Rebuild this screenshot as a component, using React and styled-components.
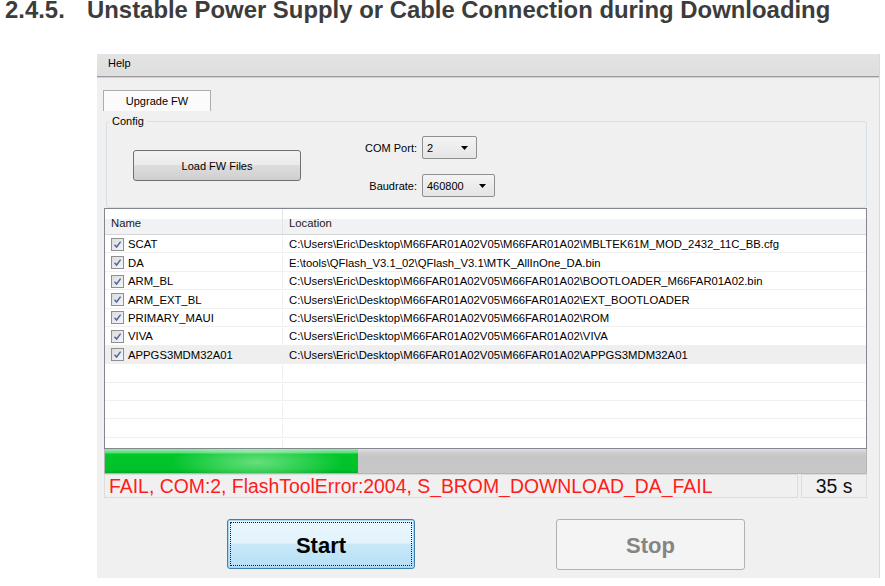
import React from 'react';
import styled, { createGlobalStyle } from 'styled-components';

const GlobalStyle = createGlobalStyle`
    html, body {
        margin: 0;
        padding: 0;
        background: #fff;
    }
    body {
        font-family: "Liberation Sans", Arial, sans-serif;
    }
`;

const Page = styled.div`
    width: 885px;
    height: 586px;
    overflow: hidden;
`;

const Heading = styled.h1`
    margin: -2px 0 0 5px;
    font: bold 23.9px/24px "Liberation Sans", Arial, sans-serif;
    color: #3c3c3c;
    white-space: nowrap;
`;

const Num = styled.span`
    display: inline-block;
    width: 82px;
`;

const Window = styled.div`
    margin: 32px 0 0 97px;
    width: 783px;
    height: 524px;
    box-sizing: border-box;
    background: #f0f0f0;
    border-right: 1px solid #dadada;
    font: 11px "Liberation Sans", Arial, sans-serif;
    color: #000;
    display: flex;
    flex-direction: column;
`;

const MenuBar = styled.div`
    height: 22px;
    line-height: 18px;
    padding-left: 11px;
    background: linear-gradient(#e4e4e4, #dedede);
    border-bottom: 1px solid #9c9c9c;
    box-shadow: 0 1px 0 #cfcfcf;
`;

const Content = styled.div`
    padding: 13px 12px 0 7px;
    display: flex;
    flex-direction: column;
`;

const Tab = styled.div`
    margin-left: -1px;
    width: 108px;
    height: 21px;
    box-sizing: border-box;
    border: 1px solid #adadad;
    border-bottom: none;
    background: #fbfbfb;
    text-align: center;
    line-height: 20px;
`;

const Group = styled.fieldset`
    margin: 4px 0 0 2px;
    padding: 0;
    height: 93px;
    box-sizing: border-box;
    min-width: 0;
    border: 1px solid #d5dfe5;
    border-radius: 3px;
`;

const Legend = styled.legend`
    margin-left: 2px;
    padding: 0 3px;
    line-height: 13px;
`;

const ConfigRow = styled.div`
    display: flex;
    align-items: flex-start;
    padding-left: 26px;
`;

const LoadButton = styled.div`
    margin-top: 22px;
    width: 168px;
    height: 31px;
    box-sizing: border-box;
    border: 1px solid #707070;
    border-radius: 3px;
    background: linear-gradient(#f2f2f2 0%, #ebebeb 50%, #dddddd 50%, #cfcfcf 100%);
    display: flex;
    align-items: center;
    justify-content: center;
`;

const PortGrid = styled.div`
    margin: 8px 0 0 55px;
    display: grid;
    grid-template-columns: 61px auto;
    column-gap: 5px;
    row-gap: 15px;
    align-items: center;
`;

const Label = styled.span`
    text-align: right;
`;

const Combo = styled.div`
    width: ${p => p.$w}px;
    height: 23px;
    box-sizing: border-box;
    border: 1px solid #8e8f8f;
    border-radius: 2px;
    background: linear-gradient(#f4f4f4, #e4e4e4);
    display: flex;
    align-items: center;
    justify-content: space-between;
    padding: 0 8px 0 4px;
`;

const Table = styled.div`
    height: 241px;
    box-sizing: border-box;
    border: 1px solid #828790;
    background: #fff;
    display: flex;
    flex-direction: column;
    overflow: hidden;
    font-size: 11.3px;
`;

const HeaderRow = styled.div`
    display: grid;
    grid-template-columns: 178px 1fr;
    height: 26px;
    box-sizing: border-box;
    background: linear-gradient(#ffffff 0%, #ffffff 42%, #f1f2f4 42%, #f1f2f4 100%);
    border-bottom: 1px solid #d5d5d5;
`;

const HeaderCell = styled.div`
    display: flex;
    align-items: center;
    padding-left: ${p => p.$pad}px;
    padding-top: 2px;
    border-right: ${p => (p.$divider ? '1px solid #e3e4e6' : 'none')};
    color: #1a1a1a;
`;

const Body = styled.div`
    flex: 1;
    overflow: hidden;
`;

const Row = styled.div`
    display: grid;
    grid-template-columns: 178px 1fr;
    height: 18.45px;
    box-sizing: border-box;
    padding-top: 1px;
    border-bottom: 1px solid #f0f0f0;
    background: ${p => (p.$active ? '#efefef' : '#fff')};
`;

const Cell = styled.div`
    display: flex;
    align-items: center;
    padding-left: ${p => p.$pad}px;
    border-right: ${p => (p.$divider ? '1px solid #f0f0f0' : 'none')};
    white-space: nowrap;
    overflow: hidden;
`;

const Box = styled.span`
    width: 13px;
    height: 13px;
    box-sizing: border-box;
    border: 1px solid #8f8f8f;
    background: linear-gradient(135deg, #dcdcdc, #f6f6f6);
    margin-right: 4px;
    display: flex;
    align-items: center;
    justify-content: center;
`;

const Progress = styled.div`
    height: 25px;
    box-sizing: border-box;
    border: 1px solid #b5b5b5;
    border-top: none;
    background: linear-gradient(#e2e2e2 0%, #cfcfcf 14%, #c6c6c6 30%, #c8c8c8 100%);
`;

const Fill = styled.div`
    height: 100%;
    background:
        linear-gradient(rgba(255, 255, 255, 0.6) 0%, rgba(255, 255, 255, 0.4) 14%, rgba(255, 255, 255, 0) 22%),
        radial-gradient(ellipse 34% 90% at 60% 55%, rgba(120, 228, 140, 0.85) 0%, rgba(0, 200, 42, 0) 100%),
        linear-gradient(#00c82a, #00c22a 85%, #04a828 100%);
`;

const StatusRow = styled.div`
    display: flex;
    gap: 3px;
    height: 24px;
`;

const StatusBox = styled.div`
    flex: ${p => (p.$grow ? 1 : '0 0 66px')};
    box-sizing: border-box;
    border: 1px solid #dcdcdc;
    padding-left: ${p => (p.$grow ? 4 : 0)}px;
    text-align: ${p => (p.$grow ? 'left' : 'center')};
    font-size: 19.4px;
    line-height: 22px;
    color: ${p => (p.$error ? '#ff1c1c' : '#111')};
    white-space: nowrap;
    overflow: hidden;
`;

const Actions = styled.div`
    display: flex;
    margin: 21px 0 0 123px;
    gap: 141px;
`;

const BigButton = styled.div`
    position: relative;
    width: ${p => p.$w}px;
    height: ${p => p.$h}px;
    box-sizing: border-box;
    padding-top: 3px;
    border-radius: 3px;
    display: flex;
    align-items: center;
    justify-content: center;
    font: bold 22px "Liberation Sans", Arial, sans-serif;
    border: 1px solid ${p => (p.$primary ? '#3c7fb1' : '#adb2b5')};
    color: ${p => (p.$primary ? '#000' : '#858585')};
    background: ${p => (p.$primary
        ? 'linear-gradient(#eaf6fd 0%, #e2f3fc 48%, #c8e8f9 50%, #b6dff5 100%)'
        : '#f4f4f4')};
    box-shadow: ${p => (p.$primary ? 'inset 0 0 0 1px #a6d6f0' : 'none')};

    &::after {
        content: '';
        display: ${p => (p.$primary ? 'block' : 'none')};
        position: absolute;
        inset: 2px;
        border: 1px dotted #1a1a1a;
        border-radius: 1px;
    }
`;

const Arrow = () => (
    <svg width="7" height="4" viewBox="0 0 7 4">
        <path d="M0 0 H7 L3.5 4 Z" fill="#000" />
    </svg>
);

const Check = () => (
    <svg width="9" height="9" viewBox="0 0 9 9">
        <path d="M1.5 4.8 L3.6 7 L7.6 1.6" fill="none" stroke="#4b67a6" strokeWidth="1.5" />
    </svg>
);

const files = [
    ['SCAT', 'C:\\Users\\Eric\\Desktop\\M66FAR01A02V05\\M66FAR01A02\\MBLTEK61M_MOD_2432_11C_BB.cfg'],
    ['DA', 'E:\\tools\\QFlash_V3.1_02\\QFlash_V3.1\\MTK_AllInOne_DA.bin'],
    ['ARM_BL', 'C:\\Users\\Eric\\Desktop\\M66FAR01A02V05\\M66FAR01A02\\BOOTLOADER_M66FAR01A02.bin'],
    ['ARM_EXT_BL', 'C:\\Users\\Eric\\Desktop\\M66FAR01A02V05\\M66FAR01A02\\EXT_BOOTLOADER'],
    ['PRIMARY_MAUI', 'C:\\Users\\Eric\\Desktop\\M66FAR01A02V05\\M66FAR01A02\\ROM'],
    ['VIVA', 'C:\\Users\\Eric\\Desktop\\M66FAR01A02V05\\M66FAR01A02\\VIVA'],
    ['APPGS3MDM32A01', 'C:\\Users\\Eric\\Desktop\\M66FAR01A02V05\\M66FAR01A02\\APPGS3MDM32A01'],
];

const progress = 33.3;

export default function App() {
    const empty = Array.from({ length: 5 });
    return (
        <Page>
            <GlobalStyle />
            <Heading><Num>2.4.5.</Num>Unstable Power Supply or Cable Connection during Downloading</Heading>
            <Window>
                <MenuBar>Help</MenuBar>
                <Content>
                    <Tab>Upgrade FW</Tab>
                    <Group>
                        <Legend>Config</Legend>
                        <ConfigRow>
                            <LoadButton>Load FW Files</LoadButton>
                            <PortGrid>
                                <Label>COM Port:</Label>
                                <Combo $w={55}><span>2</span><Arrow /></Combo>
                                <Label>Baudrate:</Label>
                                <Combo $w={73}><span>460800</span><Arrow /></Combo>
                            </PortGrid>
                        </ConfigRow>
                    </Group>
                    <Table>
                        <HeaderRow>
                            <HeaderCell $pad={6} $divider>Name</HeaderCell>
                            <HeaderCell $pad={6}>Location</HeaderCell>
                        </HeaderRow>
                        <Body>
                            {files.map(([name, loc], i) => (
                                <Row key={name} $active={i === files.length - 1}>
                                    <Cell $pad={6} $divider><Box><Check /></Box>{name}</Cell>
                                    <Cell $pad={6}>{loc}</Cell>
                                </Row>
                            ))}
                            {empty.map((_, i) => (
                                <Row key={'e' + i}>
                                    <Cell $pad={6} $divider />
                                    <Cell $pad={6} />
                                </Row>
                            ))}
                        </Body>
                    </Table>
                    <Progress>
                        <Fill style={{ width: progress + '%' }} />
                    </Progress>
                    <StatusRow>
                        <StatusBox $grow $error>FAIL, COM:2, FlashToolError:2004, S_BROM_DOWNLOAD_DA_FAIL</StatusBox>
                        <StatusBox>35 s</StatusBox>
                    </StatusRow>
                    <Actions>
                        <BigButton $primary $w={188} $h={50}>Start</BigButton>
                        <BigButton $w={189} $h={51}>Stop</BigButton>
                    </Actions>
                </Content>
            </Window>
        </Page>
    );
}
